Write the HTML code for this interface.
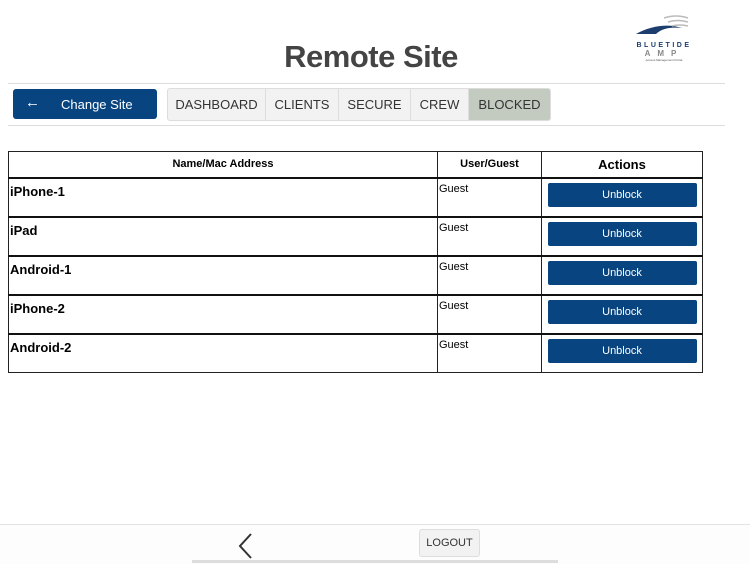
<!DOCTYPE html><html><head><style>
body{margin:0;width:750px;height:563px;background:#fff;font-family:"Liberation Sans",sans-serif;position:relative;overflow:hidden}
.a{position:absolute}
h1{position:absolute;left:0;width:742px;text-align:center;top:39px;margin:0;font-size:31px;color:#444;font-weight:bold;letter-spacing:-0.5px}
.line{position:absolute;left:8px;width:717px;height:1px;background:#ddd}
.cs{left:13px;top:89px;width:144px;height:30px;background:#074480;border-radius:3px;color:#fff;font-size:13px}
.tabs{left:167px;top:88px;height:31px;border:1px solid #ddd;border-radius:3px;background:#f2f2f2;display:flex;overflow:hidden}
.tabs div{font-size:13px;color:#333;line-height:31px;text-align:center;border-right:1px solid #ddd}
table{position:absolute;left:8px;top:151px;width:695px;border-collapse:collapse;table-layout:fixed}
td,th{border:1px solid #222;vertical-align:top;padding:0 1px;box-sizing:border-box}
th{font-size:11px;height:26px;vertical-align:middle;border-bottom:2px solid #111}
tr.r td{height:39px;border-bottom:2px solid #111}
tr.r:last-child td{border-bottom:1px solid #222}
.n{font-size:13px;font-weight:bold;padding-top:5px}
.g{font-size:11px;padding-top:4px}
.b{background:#074480;color:#fff;font-size:11px;width:149px;height:24px;line-height:24px;text-align:center;border-radius:2px;margin:4px auto 0}
</style></head><body>
<h1>Remote Site</h1>
<div class="a" style="left:634px;top:12px;width:60px;height:45px">
<svg width="60" height="25" viewBox="0 0 60 25"><path d="M2 22 Q20 12 40 14 L48 16 Q30 14 22 22 Z" fill="#1c3e6e"/><path d="M30 6 Q42 2 54 6 M34 10 Q44 7 54 10 M38 14 Q46 12 54 14" stroke="#bbb" fill="none" stroke-width="1.5"/></svg>
<div style="font-size:7px;letter-spacing:2.5px;color:#1c3e6e;font-weight:bold;text-align:center;line-height:8px">BLUETIDE</div>
<div style="font-size:8px;letter-spacing:7px;color:#888;font-weight:bold;text-align:center;line-height:8px">AMP</div>
<div style="font-size:3px;color:#555;text-align:center">Access Management Portal</div>
</div>
<div class="line" style="top:83px"></div>
<div class="line" style="top:125px"></div>
<div class="a cs"><span class="a" style="left:12px;top:5px;font-size:15px">←</span><span class="a" style="left:48px;top:8px">Change Site</span></div>
<div class="a tabs"><div style="width:97px">DASHBOARD</div><div style="width:72px">CLIENTS</div><div style="width:71px">SECURE</div><div style="width:57px">CREW</div><div style="width:81px;background:#c3cbc0;border:0">BLOCKED</div></div>
<table>
<colgroup><col style="width:429px"><col style="width:104px"><col></colgroup>
<tr><th>Name/Mac Address</th><th>User/Guest</th><th style="font-size:13px">Actions</th></tr>
<tr class="r"><td class="n">iPhone-1</td><td class="g">Guest</td><td><div class="b">Unblock</div></td></tr>
<tr class="r"><td class="n">iPad</td><td class="g">Guest</td><td><div class="b">Unblock</div></td></tr>
<tr class="r"><td class="n">Android-1</td><td class="g">Guest</td><td><div class="b">Unblock</div></td></tr>
<tr class="r"><td class="n">iPhone-2</td><td class="g">Guest</td><td><div class="b">Unblock</div></td></tr>
<tr class="r"><td class="n">Android-2</td><td class="g">Guest</td><td><div class="b">Unblock</div></td></tr>
</table>
<div class="a" style="left:0;top:524px;width:750px;height:39px;background:#fdfdfd;border-top:1px solid #e3e3e3"></div>
<div class="a" style="left:192px;top:560px;width:366px;height:3px;background:#ddd"></div>
<svg class="a" style="left:236px;top:532px" width="18" height="28"><path d="M15 2 L4 14 L15 26" stroke="#333" stroke-width="2" fill="none"/></svg>
<div class="a" style="left:419px;top:529px;width:59px;height:26px;background:#f2f2f2;border:1px solid #ddd;border-radius:3px;font-size:11px;color:#333;text-align:center;line-height:26px">LOGOUT</div>
</body></html>
